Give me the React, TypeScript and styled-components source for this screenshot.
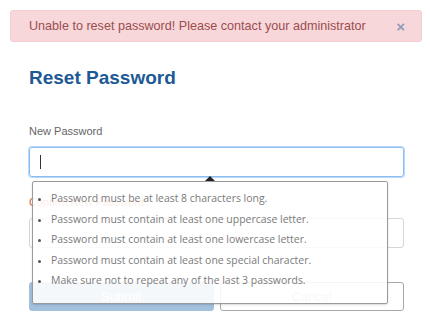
import styled, { createGlobalStyle } from 'styled-components'

const GlobalStyle = createGlobalStyle`
  html, body {
    margin: 0;
    padding: 0;
    background: #ffffff;
    font-family: "Liberation Sans", Arial, sans-serif;
  }
`

const Page = styled.div`
  width: 430px;
  height: 332px;
  padding: 10px 0 0 10px;
  box-sizing: border-box;
  overflow: hidden;
`

const Alert = styled.div`
  width: 412px;
  height: 32px;
  box-sizing: border-box;
  background: #f8d7da;
  border: 1px solid #f3cdd1;
  border-radius: 3px;
  color: #9b4d4f;
  font-size: 12.6px;
  display: flex;
  align-items: center;
  justify-content: space-between;
  padding: 0 16px 0 18px;

  .close {
    color: #8e9cbb;
    font-size: 15px;
    font-weight: 700;
    line-height: 1;
  }
`

const Form = styled.div`
  width: 375px;
  margin-left: 19px;
  display: flex;
  flex-direction: column;
`

const Title = styled.h1`
  margin: 23px 0 0;
  font-size: 19px;
  line-height: 26px;
  font-weight: 700;
  color: #1d5a95;
`

const Field = styled.div<{ $gap: number }>`
  position: relative;
  display: flex;
  flex-direction: column;
  margin-top: ${p => p.$gap}px;
`

const Label = styled.label<{ $error?: boolean }>`
  font-size: 11px;
  line-height: 13px;
  color: ${p => (p.$error ? '#d9693a' : '#666666')};
  margin-bottom: 9px;
`

const Input = styled.div<{ $focus?: boolean }>`
  height: 30px;
  box-sizing: border-box;
  border: 1px solid ${p => (p.$focus ? '#8dbdf0' : '#d6d6d6')};
  border-radius: 3px;
  box-shadow: ${p => (p.$focus ? '0 0 0 1px #b9d8fa' : 'none')};
  display: flex;
  align-items: center;
  padding-left: 10px;

  .caret {
    width: 1px;
    height: 14px;
    background: #333;
  }
`

const Tooltip = styled.div`
  position: absolute;
  top: 56px;
  left: 3px;
  width: 356px;
  height: 123px;
  box-sizing: border-box;
  background: rgba(255, 255, 255, 0.88);
  border: 1px solid #9a9a9a;
  border-radius: 2px;
  box-shadow: 0 1px 2px rgba(0, 0, 0, 0.15);
  z-index: 2;

  &::before {
    content: '';
    position: absolute;
    top: -6px;
    left: 172px;
    border-left: 5px solid transparent;
    border-right: 5px solid transparent;
    border-bottom: 5px solid #222;
  }
`

const Rules = styled.ul`
  margin: 0;
  padding: 6px 0 0 18px;
  font-family: "Open Sans", "Noto Sans", sans-serif;
  font-size: 10.45px;
  line-height: 20.5px;
  color: #7a7a7a;

  li::marker {
    color: #555;
    font-size: 9px;
  }
`

const Buttons = styled.div`
  display: flex;
  gap: 6px;
  margin-top: 34px;
`

const Button = styled.div<{ $primary?: boolean }>`
  flex: 1;
  height: 29px;
  box-sizing: border-box;
  border-radius: 3px;
  display: flex;
  align-items: center;
  justify-content: center;
  font-size: 13px;
  color: ${p => (p.$primary ? '#ffffff' : '#bbbbbb')};
  background: ${p => (p.$primary ? '#a3c0df' : '#ffffff')};
  border: 1px solid ${p => (p.$primary ? '#a3c0df' : '#a8a8a8')};
`

const rules = [
  'Password must be at least 8 characters long.',
  'Password must contain at least one uppercase letter.',
  'Password must contain at least one lowercase letter.',
  'Password must contain at least one special character.',
  'Make sure not to repeat any of the last 3 passwords.',
]

const App = () => {
  return (
    <>
      <GlobalStyle />
      <Page>
        <Alert>
          <span>Unable to reset password! Please contact your administrator</span>
          <span className="close">×</span>
        </Alert>
        <Form>
          <Title>Reset Password</Title>
          <Field $gap={34}>
            <Label>New Password</Label>
            <Input $focus>
              <div className="caret" />
            </Input>
            <Tooltip>
              <Rules>
                {rules.map(r => (
                  <li key={r}>{r}</li>
                ))}
              </Rules>
            </Tooltip>
          </Field>
          <Field $gap={19}>
            <Label $error>Confirm New Password</Label>
            <Input />
          </Field>
          <Buttons>
            <Button $primary>Submit</Button>
            <Button>Cancel</Button>
          </Buttons>
        </Form>
      </Page>
    </>
  )
}

export default App
